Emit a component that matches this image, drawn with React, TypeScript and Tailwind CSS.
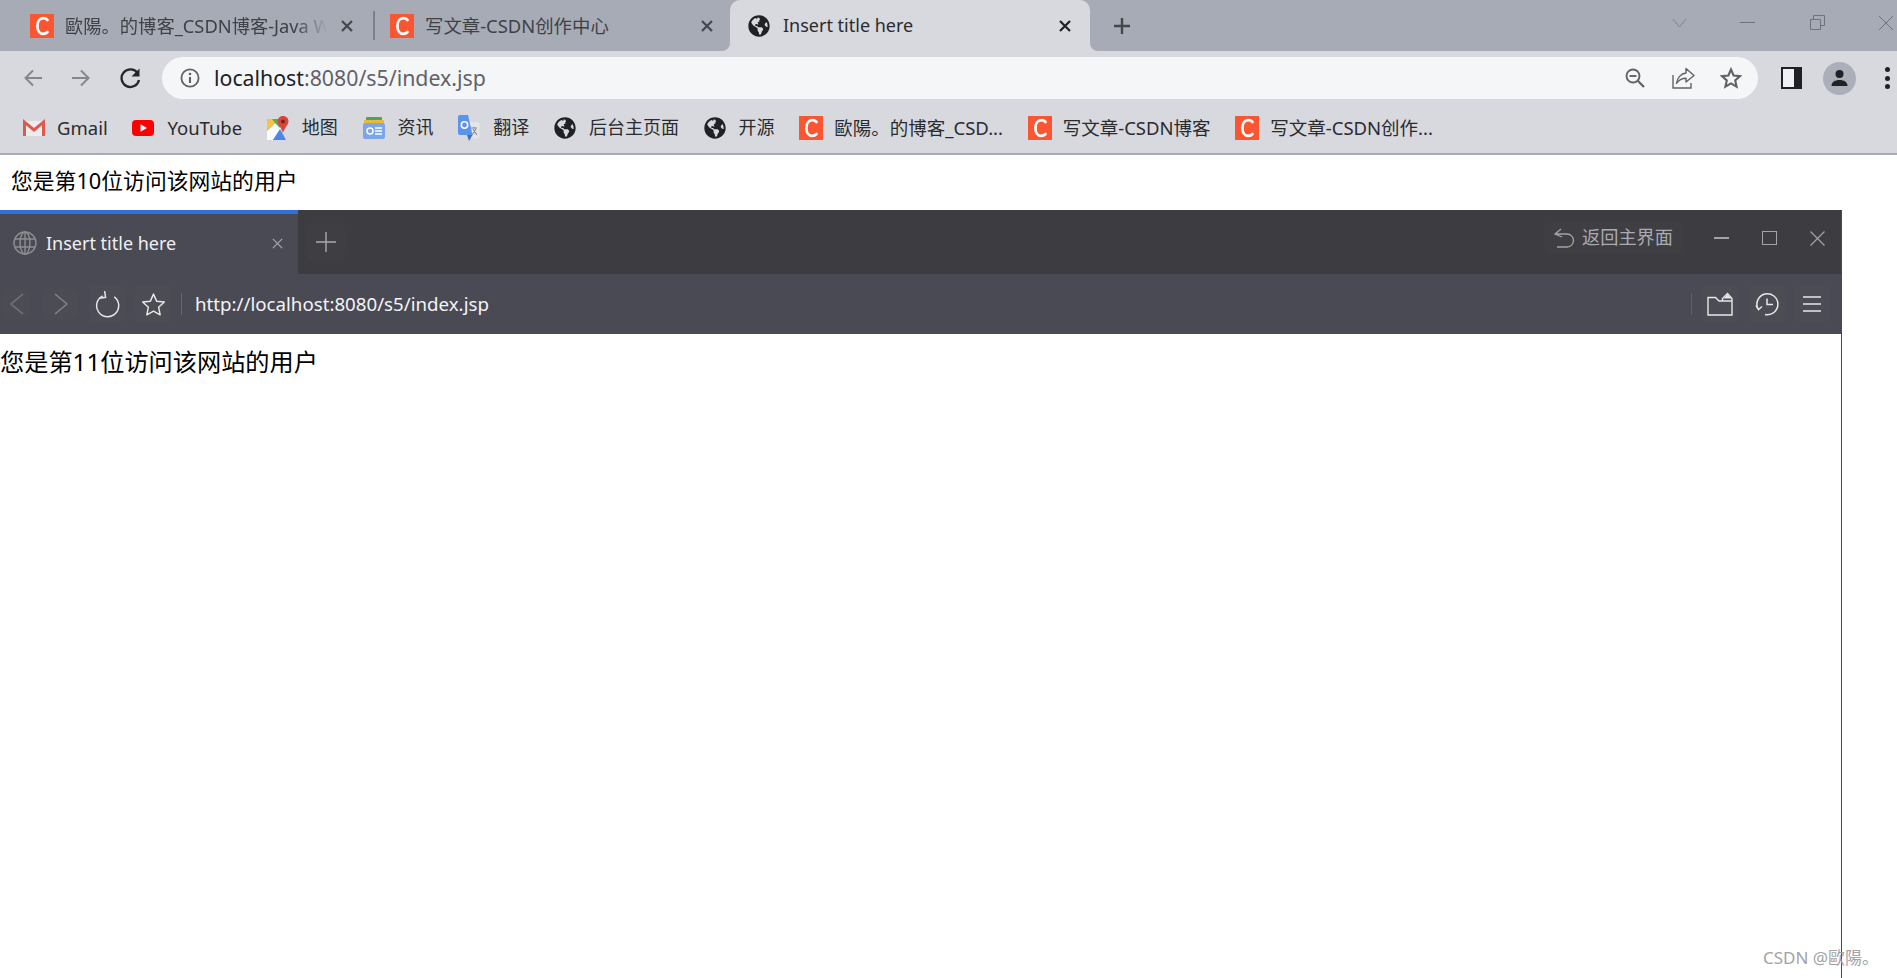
import React from "react";
import { FaGlobeAmericas } from "react-icons/fa";

const font = { fontFamily: '"Noto Sans", "Noto Sans CJK SC", sans-serif' };

function CIcon() {
  return (
    <svg viewBox="0 0 24 24" className="w-[24px] h-[24px] shrink-0">
      <rect width="24" height="24" fill="#fc5531" />
      <path d="M17.500 6C16.300 4.700 14.900 4.100 13.300 4.100 9.700 4.100 7.400 7.300 7.400 12S9.700 19.900 13.300 19.900c1.600 0 3-.6 4.200-1.900" fill="none" stroke="#fff" strokeWidth="2.700" strokeLinecap="round" />
    </svg>
  );
}

function Globe() {
  return <FaGlobeAmericas className="text-[#202124] shrink-0 w-[22px] h-[22px]" />;
}

function Close({ className = "", size = 14, color = "#45474c", w = 2.2 }: { className?: string; size?: number; color?: string; w?: number }) {
  return (
    <svg viewBox="0 0 14 14" width={size} height={size} className={`shrink-0 ${className}`}>
      <path d="M2 2l10 10M12 2L2 12" stroke={color} strokeWidth={w} fill="none" />
    </svg>
  );
}

function Gmail() {
  return (
    <svg viewBox="0 0 24 18" className="w-[24px] h-[18px] shrink-0">
      <path d="M2 2h20v15H2z" fill="#ececee" />
      <path d="M2.500 17V3.200L12 11l9.500-7.800V17" fill="none" stroke="#dc5a50" strokeWidth="3" />
    </svg>
  );
}

function YouTube() {
  return (
    <svg viewBox="0 0 22 18" className="w-[22px] h-[18px] shrink-0">
      <rect y="1" width="22" height="16" rx="4" fill="#f00" />
      <path d="M8.500 5.300l6.500 3.700-6.500 3.700z" fill="#fff" />
    </svg>
  );
}

function Maps() {
  return (
    <svg viewBox="0 0 22 24" className="w-[22px] h-[24px] shrink-0">
      <path d="M0 3h13v21H0z" fill="#4cae5b" />
      <path d="M0 15l8-8 6 6-8 11H0z" fill="#fbfbfb" />
      <path d="M6 24l7-11 6 11z" fill="#4a87e8" />
      <path d="M0 15l8-8-3-4H0z" fill="#f6c344" />
      <path d="M16 0c3.300 0 5.500 2.400 5.500 5.300 0 3.400-3.700 6-5.500 11.700-1.600-5.700-5.300-8.300-5.300-11.700C10.700 2.400 12.700 0 16 0z" fill="#d9453a" />
      <circle cx="16" cy="5.500" r="1.900" fill="#7b221a" />
    </svg>
  );
}

function News() {
  return (
    <svg viewBox="0 0 22 22" className="w-[22px] h-[22px] shrink-0">
      <rect x="3" y="0" width="16" height="9" rx="1" fill="#4aa561" />
      <rect x="1" y="3" width="20" height="4" fill="#e9b93c" />
      <rect x="0" y="6" width="22" height="16" rx="2" fill="#7ba7e8" />
      <circle cx="7" cy="14" r="3" fill="none" stroke="#fff" strokeWidth="1.500" />
      <path d="M12 11h7M12 14h7M12 17h7" stroke="#fff" strokeWidth="1.400" />
    </svg>
  );
}

function Translate() {
  return (
    <svg viewBox="0 0 22 26" className="w-[22px] h-[26px] shrink-0">
      <path d="M10 7h10a1.500 1.500 0 0 1 1.500 1.500V22a1.500 1.500 0 0 1-1.500 1.500H10z" fill="#e4e5e8" />
      <path d="M13 13h6M16 12v1M14 20l4-6M15 14l4 6" stroke="#85888e" strokeWidth="1.100" fill="none" />
      <path d="M2 0h8l4.500 20H2a2 2 0 0 1-2-2V2a2 2 0 0 1 2-2z" fill="#5b94ef" />
      <path d="M9 20l2 6 3.500-6z" fill="#3f6fc5" />
      <circle cx="6.500" cy="10" r="3.200" fill="none" stroke="#fff" strokeWidth="1.600" />
    </svg>
  );
}

function Bookmark({ icon, label, cjk = false }: { icon: React.ReactNode; label: string; cjk?: boolean }) {
  return (
    <div className="flex items-center shrink-0">
      <div className="w-[35px] shrink-0 flex items-center">{icon}</div>
      <span className={`${cjk ? "text-[18px]" : "text-[18.500px]"} text-[#2a2b2e] whitespace-nowrap`}>{label}</span>
    </div>
  );
}

function OuterChrome() {
  return (
    <div className="h-[155px] border-b-2 border-[#acadb3] bg-[#d8d9de]">
      <div className="h-[51px] bg-[#a7abb6] flex items-stretch">
        <div className="w-[373px] shrink-0 flex items-center pl-[30px]">
          <CIcon />
          <span className="ml-[11px] w-[262px] overflow-hidden whitespace-nowrap text-[18.300px] text-[#3f4146] [mask-image:linear-gradient(to_right,black_88%,transparent)]">歐陽。的博客_CSDN博客-Java Web</span>
          <Close className="ml-[13px]" size={14} />
        </div>
        <div className="w-[2px] h-[29px] self-center bg-[#7d8087] shrink-0" />
        <div className="w-[355px] shrink-0 flex items-center pl-[15px]">
          <CIcon />
          <span className="ml-[11px] w-[275px] text-[18.400px] text-[#3f4146] whitespace-nowrap">写文章-CSDN创作中心</span>
          <Close size={14} />
        </div>
        <div className="relative w-[360px] shrink-0 bg-[#d8d9de] rounded-t-[10px] flex items-center pl-[18px]">
          <svg viewBox="0 0 8 8" className="absolute left-[-8px] bottom-0 w-[8px] h-[8px]"><path d="M8 0v8H0a8 8 0 0 0 8-8z" fill="#d8d9de" /></svg>
          <svg viewBox="0 0 8 8" className="absolute right-[-8px] bottom-0 w-[8px] h-[8px]"><path d="M0 0v8h8a8 8 0 0 1-8-8z" fill="#d8d9de" /></svg>
          <Globe />
          <span className="ml-[13px] w-[275px] text-[18px] text-[#2a2b2e] whitespace-nowrap">Insert title here</span>
          <Close size={14} color="#202124" />
        </div>
        <svg viewBox="0 0 18 18" className="w-[18px] h-[18px] ml-[23px] self-center">
          <path d="M9 1v16M1 9h16" stroke="#45474c" strokeWidth="2.400" />
        </svg>
        <div className="ml-auto flex items-center pr-[3px] pb-[6px]">
          <svg viewBox="0 0 15 10" className="w-[15px] h-[10px]"><path d="M1 1l6.500 8L14 1" fill="none" stroke="#80838b" strokeWidth="1" /></svg>
          <div className="w-[15px] h-px bg-[#6f727a] ml-[53px]" />
          <svg viewBox="0 0 15 15" className="w-[15px] h-[15px] ml-[55px]"><path d="M.5 4.500h10v10H.5zM3.500 4.500v-4h11v10h-4" fill="none" stroke="#6f727a" strokeWidth="1" /></svg>
          <svg viewBox="0 0 16 16" className="w-[16px] h-[16px] ml-[53px]"><path d="M1 1l14 14M15 1L1 15" stroke="#6f727a" strokeWidth="1" fill="none" /></svg>
        </div>
      </div>

      <div className="h-[62px] flex items-start pt-[6px] pl-[23px]">
        <div className="h-[42px] flex items-center shrink-0">
          <svg viewBox="0 0 20 20" className="w-[20px] h-[20px] shrink-0"><path d="M19 10H2.500M10 2.500L2.500 10l7.500 7.500" fill="none" stroke="#85878c" strokeWidth="2" /></svg>
          <svg viewBox="0 0 20 20" className="w-[20px] h-[20px] shrink-0 ml-[28px]"><path d="M1 10h16.500M10 2.500l7.500 7.500-7.500 7.500" fill="none" stroke="#85878c" strokeWidth="2" /></svg>
          <svg viewBox="0 0 22 22" className="w-[22px] h-[22px] shrink-0 ml-[28px]"><path d="M18.500 6A8.800 8.800 0 1 0 20 13" fill="none" stroke="#25262a" strokeWidth="2.300" /><path d="M20.500 1.500v8h-8z" fill="#25262a" /></svg>
        </div>
        <div className="ml-[21px] w-[1596px] h-[42px] rounded-full bg-[#f5f6f8] flex items-center pl-[18px] pr-[16px] shrink-0">
          <svg viewBox="0 0 20 20" className="w-[20px] h-[20px] shrink-0"><circle cx="10" cy="10" r="8.600" fill="none" stroke="#5f6368" strokeWidth="1.800" /><path d="M10 9v6" stroke="#5f6368" strokeWidth="2.100" /><circle cx="10" cy="6" r="1.300" fill="#5f6368" /></svg>
          <span className="ml-[14px] text-[21.300px] whitespace-nowrap"><span className="text-[#202124]">localhost</span><span className="text-[#5f6368]">:8080/s5/index.jsp</span></span>
          <svg viewBox="0 0 20 20" className="w-[20px] h-[20px] ml-auto shrink-0"><circle cx="8" cy="8" r="6.500" fill="none" stroke="#5f6368" strokeWidth="1.900" /><path d="M4.500 8h7" stroke="#5f6368" strokeWidth="1.900" /><path d="M12.500 12.500l6.500 6.500" stroke="#5f6368" strokeWidth="2.300" /></svg>
          <svg viewBox="0 0 23 22" className="w-[23px] h-[22px] ml-[27px] shrink-0"><path d="M1 8v13h18v-5" fill="none" stroke="#5f6368" strokeWidth="1.400" /><path d="M14 1.500l8 7-8 6.500v-3.800c-4 0-7 1.300-9.500 5.300.5-5.500 4.500-10 9.500-10.500z" fill="none" stroke="#5f6368" strokeWidth="1.400" strokeLinejoin="round" /></svg>
          <svg viewBox="0 0 22 22" className="w-[22px] h-[22px] ml-[25px] shrink-0"><path d="M11 2.500l2.600 6 6.400.6-4.800 4.300 1.400 6.300L11 16.400l-5.600 3.300 1.400-6.300L2 9.100l6.400-.6z" fill="none" stroke="#5f6368" strokeWidth="2.100" /></svg>
        </div>
        <div className="h-[42px] flex items-center shrink-0">
          <div className="ml-[23px] w-[21px] h-[22px] border-[2px] border-r-[8px] border-[#202124] bg-[#f0f1f4] shrink-0" />
          <div className="ml-[21px] w-[33px] h-[33px] rounded-full bg-[#acafb9] flex items-center justify-center shrink-0">
            <svg viewBox="0 0 18 20" className="w-[19px] h-[20px]"><circle cx="9" cy="6" r="4" fill="#202124" /><path d="M1 18c0-4 3.500-6 8-6s8 2 8 6z" fill="#202124" /></svg>
          </div>
          <div className="ml-[29px] flex flex-col gap-[3.500px] shrink-0">
            <div className="w-[5px] h-[5px] rounded-full bg-[#202124]" />
            <div className="w-[5px] h-[5px] rounded-full bg-[#202124]" />
            <div className="w-[5px] h-[5px] rounded-full bg-[#202124]" />
          </div>
        </div>
      </div>

      <div className="h-[40px] flex items-center gap-[24.700px] pl-[22px] pb-[11px]">
        <Bookmark icon={<Gmail />} label="Gmail" />
        <Bookmark icon={<YouTube />} label="YouTube" />
        <Bookmark icon={<Maps />} label="地图" cjk />
        <Bookmark icon={<News />} label="资讯" cjk />
        <Bookmark icon={<Translate />} label="翻译" cjk />
        <Bookmark icon={<Globe />} label="后台主页面" cjk />
        <Bookmark icon={<Globe />} label="开源" cjk />
        <Bookmark icon={<CIcon />} label="歐陽。的博客_CSD..." />
        <Bookmark icon={<CIcon />} label="写文章-CSDN博客" />
        <Bookmark icon={<CIcon />} label="写文章-CSDN创作..." />
      </div>
    </div>
  );
}

function GhostBtn({ children, className = "" }: { children: React.ReactNode; className?: string }) {
  return <div className={`flex items-center justify-center rounded-[4px] bg-[#4b4c54] shrink-0 ${className}`}>{children}</div>;
}

function InnerBrowser() {
  return (
    <div className="w-[1842px] flex-1 border-r border-[#4a4a4e] flex flex-col">
      <div className="h-[64px] bg-[#3c3c41] flex items-stretch shrink-0">
        <div className="w-[298px] bg-[#494a53] border-t-[4px] border-[#2f6fdf] flex items-center pl-[13px] pb-[2px] shrink-0">
          <svg viewBox="0 0 24 24" className="w-[24px] h-[24px] shrink-0">
            <g fill="none" stroke="#8d8e94" strokeWidth="1.400">
              <circle cx="12" cy="12" r="11" />
              <ellipse cx="12" cy="12" rx="5" ry="11" />
              <path d="M12 1v22M2 8h20M2 16h20" />
            </g>
          </svg>
          <span className="ml-[9px] w-[225px] text-[18px] text-[#f0f0f2] whitespace-nowrap">Insert title here</span>
          <Close size={13} color="#a4a5aa" w={1.400} />
        </div>
        <div className="ml-[9px] w-[38px] h-[38px] self-center rounded-[6px] bg-[#3e3e43] flex items-center justify-center">
          <svg viewBox="0 0 20 20" className="w-[20px] h-[20px]"><path d="M10 0v20M0 10h20" stroke="#a9a9ae" strokeWidth="1.400" /></svg>
        </div>
        <div className="ml-auto flex items-center pb-[8px] pr-[16px]">
          <div className="flex items-center h-[32px] rounded-[6px] bg-[#3e3e43] px-[10px] mr-[31px]">
            <svg viewBox="0 0 22 20" className="w-[22px] h-[20px]"><path d="M7 1L1 6l7 3M2 6h11a6.500 6.500 0 0 1 0 13H3" fill="none" stroke="#a4a4a8" strokeWidth="1.300" /></svg>
            <span className="ml-[6px] text-[18.200px] text-[#a9abb0] whitespace-nowrap">返回主界面</span>
          </div>
          <div className="w-[15px] h-[1.500px] bg-[#a4a4a8] mr-[33px]" />
          <div className="w-[15px] h-[14px] border border-[#a4a4a8] mr-[33px]" />
          <svg viewBox="0 0 15 15" className="w-[15px] h-[15px]"><path d="M.5.500l14 14M14.500.500l-14 14" stroke="#a4a4a8" strokeWidth="1.200" fill="none" /></svg>
        </div>
      </div>

      <div className="h-[60px] bg-[#494a53] flex items-center shrink-0 pl-[4px]">
        <GhostBtn className="w-[26px] h-[30px]"><svg viewBox="0 0 16 22" className="w-[16px] h-[22px]"><path d="M14 1L2 11l12 10" fill="none" stroke="#76777d" strokeWidth="1.400" /></svg></GhostBtn>
        <GhostBtn className="w-[36px] h-[30px] ml-[13px]"><svg viewBox="0 0 16 22" className="w-[16px] h-[22px]"><path d="M2 1l12 10L2 21" fill="none" stroke="#84858b" strokeWidth="1.400" /></svg></GhostBtn>
        <GhostBtn className="w-[36px] h-[36px] ml-[10px]"><svg viewBox="0 0 26 28" className="w-[25px] h-[27px]"><path d="M8 5A11.500 11.500 0 1 0 20 6" fill="none" stroke="#e8e8ea" strokeWidth="1.500" /><path d="M10 0l1 6.500-6.500 1" fill="none" stroke="#e8e8ea" strokeWidth="1.500" /></svg></GhostBtn>
        <GhostBtn className="w-[36px] h-[36px] ml-[10px]"><svg viewBox="0 0 24 24" className="w-[25px] h-[25px]"><path d="M12 2l3 6.800 7.400.8-5.500 5 1.500 7.300L12 18.300l-6.400 3.600 1.500-7.300-5.500-5 7.400-.8z" fill="none" stroke="#e8e8ea" strokeWidth="1.400" strokeLinejoin="round" /></svg></GhostBtn>
        <div className="w-px h-[22px] bg-[#66676e] ml-[10px] shrink-0" />
        <span className="ml-[13px] text-[18.700px] text-[#f4f4f6] whitespace-nowrap">http://localhost:8080/s5/index.jsp</span>
        <div className="ml-auto w-px h-[22px] bg-[#5f6067] shrink-0" />
        <GhostBtn className="w-[36px] h-[36px] ml-[10px]"><svg viewBox="0 0 26 24" className="w-[26px] h-[24px]"><path d="M1 5.500v17.500h24V9H12L8.500 5.500zM15.500 9V6.500l5-5 4.500 5V9" fill="none" stroke="#e8e8ea" strokeWidth="1.400" /><path d="M16.500 6.500l4-4 4 4z" fill="#e8e8ea" /></svg></GhostBtn>
        <GhostBtn className="w-[36px] h-[36px] ml-[11px]"><svg viewBox="0 0 24 24" className="w-[24px] h-[24px]"><path d="M3 17A10.500 10.500 0 1 1 10 22.500M12 6.500V12.500H18M1 13.500l2.500 4 3.500-3" fill="none" stroke="#e8e8ea" strokeWidth="1.500" /></svg></GhostBtn>
        <GhostBtn className="w-[36px] h-[36px] ml-[9px] mr-[11px]"><svg viewBox="0 0 20 18" className="w-[20px] h-[18px]"><path d="M1 2h18M1 9h18M1 16h18" stroke="#e8e8ea" strokeWidth="1.500" /></svg></GhostBtn>
      </div>

      <div className="flex-1 text-[24.200px] text-black pt-[13px] leading-[30px]">您是第11位访问该网站的用户</div>
    </div>
  );
}

export default function App() {
  return (
    <div className="w-[1897px] h-[978px] bg-white overflow-hidden flex flex-col relative" style={font}>
      <OuterChrome />
      <div className="h-[55px] shrink-0 pl-[11px] pt-[10px] text-[21.800px] leading-[32px] text-black">您是第10位访问该网站的用户</div>
      <InnerBrowser />
      <div className="absolute left-[1763px] top-[946px] text-[17px] leading-[24px] text-[#a3a3a3] whitespace-nowrap">CSDN @歐陽。</div>
    </div>
  );
}
